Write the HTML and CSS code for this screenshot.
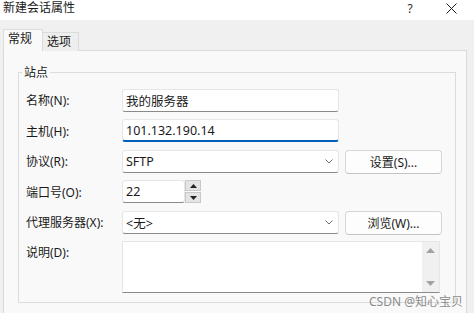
FILE: index.html
```html
<!DOCTYPE html>
<html lang="zh-CN">

<head>
    <meta charset="UTF-8">
    <meta name="viewport" content="width=device-width, initial-scale=1.0">
    <title>新建会话属性</title>
    <link rel="stylesheet" href="styles.css">
</head>

<body>
    <div class="dialog">
        <div class="titlebar">
            <span class="title">新建会话属性</span>
            <span class="ctrl help">?</span>
            <span class="ctrl close">
                <svg width="11" height="11" viewBox="0 0 11 11">
                    <path d="M0.5 0.5 L10.5 10.5 M10.5 0.5 L0.5 10.5" stroke="#1a1a1a" stroke-width="1" fill="none" />
                </svg>
            </span>
        </div>
        <div class="tabs">
            <div class="tab active">常规</div>
            <div class="tab">选项</div>
        </div>
        <div class="panel">
            <fieldset class="group">
                <legend>站点</legend>
                <div class="form">
                    <label>名称(N):</label>
                    <div class="field">我的服务器</div>
                    <div></div>

                    <label>主机(H):</label>
                    <div class="field focused">101.132.190.14</div>
                    <div></div>

                    <label>协议(R):</label>
                    <div class="field select">
                        <span>SFTP</span>
                        <svg class="chevron" width="8" height="5" viewBox="0 0 8 5">
                            <path d="M0.5 0.5 L4 4 L7.5 0.5" stroke="#707070" fill="none" />
                        </svg>
                    </div>
                    <div class="btn">设置(S)...</div>

                    <label>端口号(O):</label>
                    <div class="port">
                        <div class="field port-input">22</div>
                        <div class="spin">
                            <div class="spin-btn">
                                <svg width="7" height="4" viewBox="0 0 7 4"><path d="M0 4 L3.5 0 L7 4 Z" fill="#222" /></svg>
                            </div>
                            <div class="spin-btn">
                                <svg width="7" height="4" viewBox="0 0 7 4"><path d="M0 0 L3.5 4 L7 0 Z" fill="#222" /></svg>
                            </div>
                        </div>
                    </div>
                    <div></div>

                    <label>代理服务器(X):</label>
                    <div class="field select">
                        <span>&lt;无&gt;</span>
                        <svg class="chevron" width="8" height="5" viewBox="0 0 8 5">
                            <path d="M0.5 0.5 L4 4 L7.5 0.5" stroke="#707070" fill="none" />
                        </svg>
                    </div>
                    <div class="btn">浏览(W)...</div>

                    <label class="top">说明(D):</label>
                    <div class="field memo">
                        <div class="memo-text"></div>
                        <div class="scrollbar">
                            <svg width="9" height="5" viewBox="0 0 9 5"><path d="M0 5 L4.5 0 L9 5 Z" fill="#a3a3a3" /></svg>
                            <svg width="9" height="5" viewBox="0 0 9 5"><path d="M0 0 L4.5 5 L9 0 Z" fill="#a3a3a3" /></svg>
                        </div>
                    </div>
                </div>
            </fieldset>
        </div>
        <div class="watermark">CSDN @知心宝贝</div>
    </div>
</body>

</html>
```

FILE: styles.css
```css
body {
    margin: 0;
    background-color: #f0f0f0;
}

.dialog {
    position: relative;
    width: 474px;
    height: 313px;
    overflow: hidden;
    background-color: #f0f0f0;
    font-family: "Noto Sans", "Noto Sans CJK SC", sans-serif;
    font-size: 12px;
    color: #1a1a1a;
}

.titlebar {
    display: flex;
    align-items: center;
    height: 20px;
    background-color: #ffffff;
    padding-left: 3px;
}

.titlebar .title {
    flex: 1;
    line-height: 16px;
    margin-top: -4px;
}

.titlebar .ctrl {
    display: flex;
    align-items: center;
    justify-content: center;
    width: 20px;
    margin-top: -4px;
}

.titlebar .help {
    margin-right: 21px;
    font-size: 12px;
    color: #333;
}

.titlebar .close {
    margin-right: 13px;
}

.tabs {
    display: flex;
    align-items: flex-end;
    height: 30px;
    padding-left: 3px;
}

.tab {
    height: 18px;
    line-height: 18px;
    padding: 0 7px 0 4px;
    border: 1px solid #dcdcdc;
    border-bottom: none;
    background-color: #eeeeee;
    margin-bottom: -1px;
}

.tab.active {
    height: 21px;
    line-height: 18px;
    padding: 0 10px 0 4px;
    background-color: #f9f9f9;
    position: relative;
    z-index: 1;
    margin-bottom: -1px;
}

.tab+.tab {
    border-left: none;
}

.panel {
    width: 438px;
    height: 280px;
    margin-left: 3px;
    padding: 13px 10px 0 14px;
    border: 1px solid #dadada;
    background-color: #f9f9f9;
}

.group {
    margin: 0;
    padding: 0 7px 7px 7px;
    border: 1px solid #dcdcdc;
    min-width: 0;
}

.group legend {
    margin-left: -4px;
    padding: 0 2px;
    line-height: 17px;
}

.form {
    display: grid;
    grid-template-columns: 90px 217px 97px;
    grid-auto-rows: 23px;
    column-gap: 6px;
    row-gap: 7.5px;
    margin-top: 7.5px;
}

.form label {
    display: flex;
    align-items: center;
}

.form label.top {
    align-items: flex-start;
    padding-top: 2px;
}

.field {
    display: flex;
    align-items: center;
    box-sizing: border-box;
    padding-left: 3px;
    background-color: #ffffff;
    border: 1px solid #e6e6e6;
    border-bottom-color: #8a8a8a;
    border-radius: 3px;
    font-size: 12.5px;
}

.field.focused {
    border-bottom: 2px solid #005fb8;
}

.field.select {
    justify-content: space-between;
    padding-right: 5px;
}

.btn {
    display: flex;
    align-items: center;
    justify-content: center;
    box-sizing: border-box;
    height: 24px;
    background-color: #fdfdfd;
    border: 1px solid #d6d6d6;
    border-bottom-color: #c4c4c4;
    border-radius: 4px;
}

.port {
    display: flex;
}

.port-input {
    width: 63px;
}

.spin {
    display: flex;
    flex-direction: column;
    width: 16px;
    height: 23px;
    gap: 1px;
    background-color: #f9f9f9;
}

.spin-btn {
    flex: 1;
    display: flex;
    align-items: center;
    justify-content: center;
    background-color: #e4e4e4;
    border: 1px solid #c9c9c9;
}

.field.memo {
    grid-column: 2 / 4;
    grid-row: span 2;
    height: 52px;
    margin-right: 2px;
    padding: 0;
    align-items: stretch;
    border-radius: 0;
}

.memo-text {
    flex: 1;
}

.scrollbar {
    display: flex;
    flex-direction: column;
    justify-content: space-between;
    align-items: center;
    width: 17px;
    padding: 6px 0;
    box-sizing: border-box;
    background-color: #f0f0f0;
}

.watermark {
    position: absolute;
    right: 11px;
    bottom: 3px;
    font-size: 12px;
    color: #8c8c8c;
}
```
